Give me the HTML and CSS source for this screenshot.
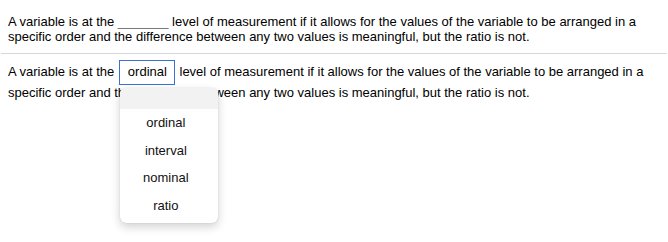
FILE: index.html
```html
<!DOCTYPE html>
<html>
<head>
<meta charset="utf-8">
<link rel="stylesheet" href="styles.css">
</head>
<body>
<main class="page">
<p class="q q-first">A variable is at the <span class="blank">_______</span> level of measurement if it allows for the values of the variable to be arranged in a specific order and the difference between any two values is meaningful, but the ratio is not.</p>
<div class="sep"></div>
<p class="q q-second">A variable is at the <span class="select">ordinal<span class="menu"><span class="menu-head"></span><span class="opt">ordinal</span><span class="opt">interval</span><span class="opt">nominal</span><span class="opt">ratio</span></span></span> level of measurement if it allows for the values of the variable to be arranged in a specific order and the difference between any two values is meaningful, but the ratio is not.</p>
</main>
</body>
</html>
```
FILE: styles.css
```css
html, body {
  margin: 0;
  background: #fff;
}
body {
  font-family: "Liberation Sans", Arial, sans-serif;
  font-size: 13px;
  line-height: 15px;
  color: #000;
}
.page {
  display: block;
  min-height: 242px;
}
.q {
  margin: 0;
  padding: 0 8px;
}
.q-first {
  padding-top: 14px;
}
.blank {
  color: #666;
}
.sep {
  margin: 9px 1px 0;
  border-top: 1px solid #d6d8de;
}
.q-second {
  padding-top: 6px;
}
.select {
  position: relative;
  display: inline-block;
  margin: 0 1px 0 1px;
  padding: 3px 7px 5px 8px;
  border: 1px solid #3a6fd6;
}
.menu {
  position: absolute;
  top: 27px;
  left: 0;
  display: block;
  width: 98px;
  height: 135px;
  box-sizing: border-box;
  padding-bottom: 4px;
  background: #fff;
  border-radius: 6px;
  box-shadow: 0 0 1px rgba(0, 0, 0, 0.25), 0 4px 10px rgba(0, 0, 0, 0.18);
  z-index: 2;
}
.menu-head {
  display: block;
  height: 21px;
  background: #f2f2f2;
  border-radius: 6px 6px 0 0;
}
.opt {
  display: block;
  height: 27.5px;
  line-height: 27.5px;
  text-align: center;
  padding-right: 6px;
  color: #111;
}
```
